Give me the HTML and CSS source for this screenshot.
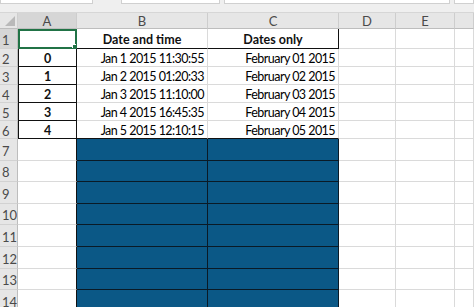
FILE: index.html
```html
<!DOCTYPE html>
<html lang="en">
<head>
  <meta charset="UTF-8">
  <title>Dates</title>
  <link rel="stylesheet" href="styles.css">
</head>
<body>
  <div class="sheet">
    <!-- 公式栏底部 -->
    <div class="strip">
      <span class="box w92"></span>
      <span class="box w98"></span>
      <span class="box w226"></span>
      <span class="box grow"></span>
    </div>
    <!-- 列标题 -->
    <div class="row head">
      <div class="corner"><svg width="10" height="10" viewBox="0 0 10 10"><polygon points="10,0 10,10 0,10" fill="#b9b9b9"/></svg></div>
      <div class="ch sel">A</div>
      <div class="ch">B</div>
      <div class="ch">C</div>
      <div class="ch">D</div>
      <div class="ch">E</div>
      <div class="ch"></div>
    </div>
    <div class="row r1">
      <div class="rh sel">1</div>
      <div class="c active"></div>
      <div class="c bold mid bb">Date and time</div>
      <div class="c bold mid bb br">Dates only</div>
      <div class="c"></div><div class="c"></div><div class="c"></div>
    </div>
    <div class="row r2">
      <div class="rh">2</div>
      <div class="c bold mid box-a">0</div>
      <div class="c num">Jan 1 2015 11:30:55</div>
      <div class="c num">February 01 2015</div>
      <div class="c"></div><div class="c"></div><div class="c"></div>
    </div>
    <div class="row r2">
      <div class="rh">3</div>
      <div class="c bold mid box-a">1</div>
      <div class="c num">Jan 2 2015 01:20:33</div>
      <div class="c num">February 02 2015</div>
      <div class="c"></div><div class="c"></div><div class="c"></div>
    </div>
    <div class="row r2">
      <div class="rh">4</div>
      <div class="c bold mid box-a">2</div>
      <div class="c num">Jan 3 2015 11:10:00</div>
      <div class="c num">February 03 2015</div>
      <div class="c"></div><div class="c"></div><div class="c"></div>
    </div>
    <div class="row r2">
      <div class="rh">5</div>
      <div class="c bold mid box-a">3</div>
      <div class="c num">Jan 4 2015 16:45:35</div>
      <div class="c num">February 04 2015</div>
      <div class="c"></div><div class="c"></div><div class="c"></div>
    </div>
    <div class="row r2">
      <div class="rh">6</div>
      <div class="c bold mid box-a">4</div>
      <div class="c num bb">Jan 5 2015 12:10:15</div>
      <div class="c num bb">February 05 2015</div>
      <div class="c"></div><div class="c"></div><div class="c"></div>
    </div>
    <div class="row h22">
      <div class="rh">7</div>
      <div class="c br"></div><div class="c fill"></div><div class="c fill"></div>
      <div class="c"></div><div class="c"></div><div class="c"></div>
    </div>
    <div class="row h21">
      <div class="rh">8</div>
      <div class="c br"></div><div class="c fill"></div><div class="c fill"></div>
      <div class="c"></div><div class="c"></div><div class="c"></div>
    </div>
    <div class="row h22">
      <div class="rh">9</div>
      <div class="c br"></div><div class="c fill"></div><div class="c fill"></div>
      <div class="c"></div><div class="c"></div><div class="c"></div>
    </div>
    <div class="row h21">
      <div class="rh">10</div>
      <div class="c br"></div><div class="c fill"></div><div class="c fill"></div>
      <div class="c"></div><div class="c"></div><div class="c"></div>
    </div>
    <div class="row h22">
      <div class="rh">11</div>
      <div class="c br"></div><div class="c fill"></div><div class="c fill"></div>
      <div class="c"></div><div class="c"></div><div class="c"></div>
    </div>
    <div class="row h22">
      <div class="rh">12</div>
      <div class="c br"></div><div class="c fill"></div><div class="c fill"></div>
      <div class="c"></div><div class="c"></div><div class="c"></div>
    </div>
    <div class="row h21">
      <div class="rh">13</div>
      <div class="c br"></div><div class="c fill"></div><div class="c fill"></div>
      <div class="c"></div><div class="c"></div><div class="c"></div>
    </div>
    <div class="row h22">
      <div class="rh">14</div>
      <div class="c br"></div><div class="c fill"></div><div class="c fill"></div>
      <div class="c"></div><div class="c"></div><div class="c"></div>
    </div>
  </div>
</body>
</html>
```

FILE: styles.css
```css
body {
  margin: 0;
  overflow: hidden;
  background: #fff;
  font-family: Lato, "Liberation Sans", sans-serif;
}
.sheet {
  width: 474px;
  height: 307px;
  overflow: hidden;
}
/* 公式栏底部 */
.strip {
  display: flex;
  gap: 4px;
  height: 13px;
  background: #efefef;
  border-bottom: 1px solid #d6d6d6;
  box-sizing: border-box;
}
.box {
  height: 3px;
  background: #fff;
  border: 1px solid #d0d0d0;
  border-top: none;
}
.w92 { width: 91px; margin-right: 24px; }
.w98 { width: 97px; }
.w226 { width: 224px; }
.grow { flex: 1; }
/* 行 */
.row {
  display: grid;
  grid-template-columns: 18px 59px 131px 131px 57px 59px 1fr;
}
.row > div {
  box-sizing: border-box;
  display: flex;
  align-items: center;
  overflow: hidden;
  white-space: nowrap;
}
.head { height: 16px; }
.r1 { height: 20px; }
.r2 { height: 18px; }
.h22 { height: 22px; }
.h21 { height: 21px; }
/* 标题 */
.corner {
  background: #e6e6e6;
  border-right: 1px solid #cfcfcf;
  border-bottom: 1px solid #bdbdbd;
  justify-content: flex-end;
  align-items: flex-end !important;
  padding: 0 2px 2px 0;
}
.ch {
  justify-content: center;
  background: #e6e6e6;
  border-right: 1px solid #cdcdcd;
  border-bottom: 1px solid #bdbdbd;
  font-size: 13px;
  color: #4a4a4a;
}
.rh {
  padding: 2px 0 0 2px;
  background: #e6e6e6;
  border-right: 1px solid #bdbdbd;
  border-bottom: 1px solid #d2d2d2;
  font-size: 13px;
  color: #4a4a4a;
}
.ch.sel, .rh.sel {
  background: #d6d6d6;
}
/* 单元格 */
.c {
  padding-top: 1px;
  border-right: 1px solid #dadada;
  border-bottom: 1px solid #dadada;
  font-size: 12.5px;
  color: #111;
}
.bold { font-weight: bold; }
.mid { justify-content: center; }
.num {
  justify-content: flex-end;
  padding-right: 3px;
  letter-spacing: -0.55px;
  color: #000;
}
.bb { border-bottom-color: #111 !important; }
.br { border-right-color: #111 !important; }
.box-a {
  border-left: 1px solid #111;
  border-right-color: #111;
  border-bottom-color: #111;
}
.fill {
  background: #0b5886;
  border-right-color: #0a1a26;
  border-bottom-color: #0a1a26;
}
/* 选中的单元格 */
.active {
  position: relative;
  outline: 2px solid #217346;
  outline-offset: -2px;
  border-bottom-color: #217346;
}
.active::after {
  content: "";
  position: absolute;
  right: -3px;
  bottom: -3px;
  width: 5px;
  height: 5px;
  background: #217346;
  border: 1px solid #fff;
  z-index: 2;
}
```
